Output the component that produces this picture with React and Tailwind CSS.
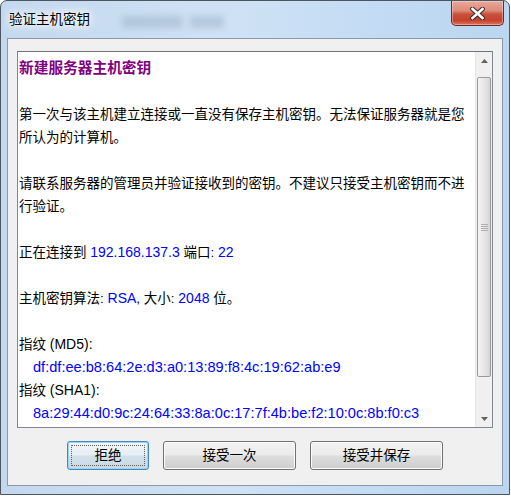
import React from "react";

const FONT = { fontFamily: '"Liberation Sans", "Noto Sans CJK SC", sans-serif' };

const Blue = ({ children }) => <span className="text-[14px] text-[#0000ff]">{children}</span>;

const Blank = () => <div className="h-[23px]" />;

function CloseButton() {
  return (
    <div className="mr-[5px] flex h-[25px] w-[53px] items-center justify-center rounded-b-[5px] border border-t-0 border-[#6b2a22] bg-[linear-gradient(to_bottom,#e9a99b_0%,#dd8a78_40%,#c9503c_55%,#c5412c_80%,#d77560_100%)] shadow-[inset_0_0_0_1px_rgba(255,255,255,0.35)]">
      <svg width="15" height="13" viewBox="0 0 15 13">
        <path d="M2.5 2 L12.5 11 M12.5 2 L2.5 11" stroke="#3b2a2a" strokeWidth="4.6" strokeLinecap="square" />
        <path d="M2.5 2 L12.5 11 M12.5 2 L2.5 11" stroke="#ffffff" strokeWidth="2.6" strokeLinecap="square" />
      </svg>
    </div>
  );
}

function Scrollbar() {
  return (
    <div className="flex w-[17px] flex-col border-l border-[#e6e6e6] bg-[#f0f0f0]">
      <div className="flex h-[17px] items-center justify-center">
        <svg width="7" height="4" viewBox="0 0 7 4">
          <path d="M3.5 0 L7 4 L0 4 Z" fill="#606060" />
        </svg>
      </div>
      <div className="h-[8px]" />
      <div className="mx-px flex h-[300px] items-center justify-center rounded-[2px] border border-[#9a9a9a] bg-[linear-gradient(to_right,#f4f4f4,#e8e8e8_50%,#d4d4d4)]">
        <div className="flex flex-col gap-[1px]">
          <div className="h-px w-[7px] bg-[#b0b0b0]" />
          <div className="h-px w-[7px] bg-[#b0b0b0]" />
          <div className="h-px w-[7px] bg-[#b0b0b0]" />
          <div className="h-px w-[7px] bg-[#b0b0b0]" />
        </div>
      </div>
      <div className="flex-1" />
      <div className="flex h-[17px] items-center justify-center">
        <svg width="7" height="4" viewBox="0 0 7 4">
          <path d="M0 0 L7 0 L3.5 4 Z" fill="#606060" />
        </svg>
      </div>
    </div>
  );
}

function Button({ label, width, isDefault }) {
  if (isDefault) {
    return (
      <div
        className="flex h-[29px] items-center justify-center rounded-[3px] border border-[#3a8ac4] bg-[linear-gradient(to_bottom,#f2f6f9_0%,#e6eef4_48%,#d3e0ea_52%,#c9d8e3_100%)] p-[3px] shadow-[inset_0_0_0_1px_#9fd3f2]"
        style={{ width }}
      >
        <div className="flex h-full w-full items-center justify-center border border-dotted border-[#606060] text-[13.5px] leading-none text-black">
          {label}
        </div>
      </div>
    );
  }
  return (
    <div
      className="flex h-[29px] items-center justify-center rounded-[3px] border border-[#707070] bg-[linear-gradient(to_bottom,#f2f2f2_0%,#ebebeb_48%,#dddddd_52%,#cfcfcf_100%)] text-[13.5px] leading-none text-black shadow-[inset_0_0_0_1px_#fbfbfb]"
      style={{ width }}
    >
      {label}
    </div>
  );
}

export default function App() {
  return (
    <div className="h-[497px] w-[511px] overflow-hidden bg-white" style={FONT}>
      <div className="flex h-[495px] w-[510px] flex-col rounded-t-[7px] border border-[#4b5662] bg-[linear-gradient(to_right,#c3d8ee_0%,#cfe2f5_45%,#c4dcf4_70%,#bcd5f0_100%)]">
        {/* title bar */}
        <div className="flex h-[37px] items-start justify-between">
          <div className="flex items-start">
            <div className="pl-[8px] pt-[11px] text-[13.5px] leading-[16px] text-black [text-shadow:0_0_6px_#fff,0_0_10px_#fff,0_0_14px_#fff]">
              验证主机密钥
            </div>
            <div className="ml-[32px] mt-[15px] h-[12px] w-[60px] bg-[#8ea5bb]/40 blur-[3px]" />
            <div className="ml-[8px] mt-[15px] h-[12px] w-[34px] bg-[#8ea5bb]/40 blur-[3px]" />
          </div>
          <CloseButton />
        </div>

        {/* client area */}
        <div className="mx-[6px] flex h-[448px] flex-col border border-[#8a9aab] bg-[#f0f0f0]">
          <div className="mx-[9px] mt-[12px] flex h-[377px] border border-[#828790] border-t-[#6f737a] bg-white">
            <div className="flex-1 overflow-hidden pl-[1px] pt-[5px] text-[13.5px] leading-[23px] text-black">
              <div className="text-[14.7px] font-bold text-[#800080]">新建服务器主机密钥</div>
              <Blank />
              <div>第一次与该主机建立连接或一直没有保存主机密钥。无法保证服务器就是您所认为的计算机。</div>
              <Blank />
              <div>请联系服务器的管理员并验证接收到的密钥。不建议只接受主机密钥而不进行验证。</div>
              <Blank />
              <div>
                正在连接到 <Blue>192.168.137.3</Blue> 端口: <Blue>22</Blue>
              </div>
              <Blank />
              <div>
                主机密钥算法: <Blue>RSA</Blue>, 大小: <Blue>2048</Blue> 位。
              </div>
              <Blank />
              <div>
                指纹 <span className="text-[14px]">(MD5):</span>
              </div>
              <div className="pl-[14px] text-[14.6px] text-[#0000ff]">df:df:ee:b8:64:2e:d3:a0:13:89:f8:4c:19:62:ab:e9</div>
              <div>
                指纹 <span className="text-[14px]">(SHA1):</span>
              </div>
              <div className="pl-[14px] text-[14.6px] text-[#0000ff]">
                8a:29:44:d0:9c:24:64:33:8a:0c:17:7f:4b:be:f2:10:0c:8b:f0:c3
              </div>
            </div>
            <Scrollbar />
          </div>

          <div className="mt-[13px] flex gap-[14px] pl-[59px]">
            <Button label="拒绝" width={82} isDefault />
            <Button label="接受一次" width={133} />
            <Button label="接受并保存" width={133} />
          </div>
        </div>
      </div>
    </div>
  );
}
